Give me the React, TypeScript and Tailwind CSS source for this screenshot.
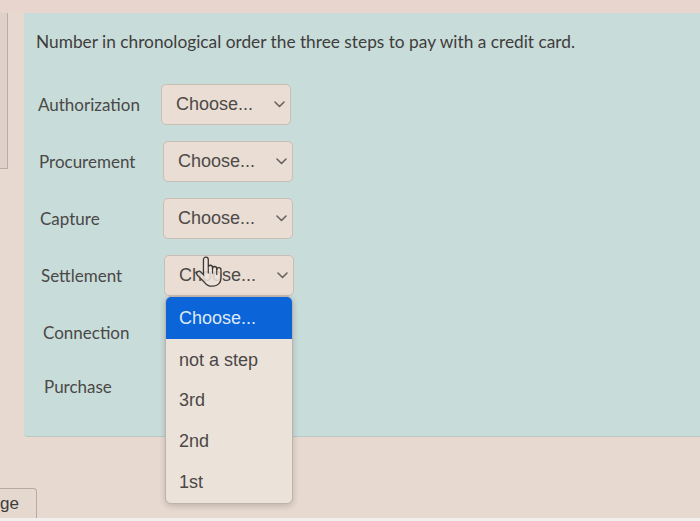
import React from 'react'

// slight per-row shift, the photo is taken at an angle
const rows = [
  { label: 'Authorization', select: true, shift: 'pl-[2px]', selShift: 'ml-0' },
  { label: 'Procurement', select: true, shift: 'pl-[3px]', selShift: 'ml-[2px]' },
  { label: 'Capture', select: true, shift: 'pl-[4px]', selShift: 'ml-[2px]' },
  { label: 'Settlement', select: true, shift: 'pl-[5px]', selShift: 'ml-[3px]' },
  { label: 'Connection', select: false, shift: 'pl-[7px]', selShift: '' },
  { label: 'Purchase', select: false, shift: 'pl-[8px]', selShift: '' },
]

const options = ['not a step', '3rd', '2nd', '1st']

function Chevron() {
  return (
    <svg className="w-[11px] h-[7px]" viewBox="0 0 11 7" fill="none">
      <path d="M1 1l4.5 4.5L10 1" stroke="#6b6461" strokeWidth={1.6} strokeLinecap="round" strokeLinejoin="round" />
    </svg>
  )
}

function FakeSelect({ className }: { className: string }) {
  return (
    <div className={`${className} w-[130px] h-[41px] flex items-center justify-between pl-[14px] pr-[5px] bg-[#e9ddd4] border border-[#c9beb6] rounded-[5px] font-['Liberation_Sans',Arial,sans-serif] text-[18px] text-[#4d4a48]`}>
      <span>Choose...</span>
      <Chevron />
    </div>
  )
}

function HandCursor() {
  return (
    <svg className="absolute left-[195px] top-[255px] w-[29px] h-[37px]" viewBox="0 0 24 30" fill="none">
      <path
        d="M9 1.5c-1.1 0-2 .9-2 2V16l-2.2-2.3c-.8-.8-2-.8-2.8 0-.8.8-.8 2 0 2.8L8 22.5c1.5 1.8 3.5 3 6 3h1c3.6 0 6.5-2.9 6.5-6.5V12c0-1-.8-1.8-1.8-1.8s-1.7.8-1.7 1.8v-1c0-1-.8-1.8-1.8-1.8s-1.7.8-1.7 1.8v-1c0-1-.8-1.8-1.8-1.8S11 9 11 10V3.5c0-1.1-.9-2-2-2z"
        fill="#ede4dc"
        fillOpacity={0.85}
        stroke="#3f3a38"
        strokeWidth={1.1}
      />
      <path d="M11 10v5M14.5 10.2v5M18 11.2v5" stroke="#3f3a38" strokeWidth={1} />
    </svg>
  )
}

export default function App() {
  return (
    <div className="relative w-[700px] h-[521px] overflow-hidden bg-[#e7d9d0] font-['Lato',sans-serif]">
      <div className="h-[13px] bg-[#e8d6ce]" />

      <div className="flex">
        <div className="w-[8px] h-[156px] bg-[#ddd1c9] border-r border-b border-[#b8aca5] shrink-0" />
        <div className="ml-[16px] flex-1 h-[424px] bg-[#c8dcd9] rounded-bl-[4px] border-b border-[#b8c8c5] pt-[18px] pl-[12px]">
          <p className="text-[17.3px] leading-[22px] text-[#3f3d3c]">
            Number in chronological order the three steps to pay with a credit card.
          </p>

          <div className="mt-[31px] flex flex-col gap-[16px]">
            {rows.map((r, i) => (
              <div
                key={r.label}
                className={`flex items-center h-[41px] ${i === 5 ? 'mt-[-3px]' : ''}`}
              >
                <span className={`w-[125px] ${r.shift} text-[17px] text-[#4a4847]`}>{r.label}</span>
                {r.select && <FakeSelect className={r.selShift} />}
              </div>
            ))}
          </div>
        </div>
      </div>

      <HandCursor />

      <div className="absolute left-[165px] top-[296px] w-[128px] h-[208px] bg-[#ebe2da] border border-[#bdb3ac] rounded-[6px] shadow-[0_2px_6px_rgba(0,0,0,0.18)] overflow-hidden font-['Liberation_Sans',Arial,sans-serif] text-[18px]">
        <div className="h-[42px] bg-[#0b64d8] text-[#dfeaf8] flex items-center pl-[13px]">Choose...</div>
        {options.map((o, i) => (
          <div key={o} className={`h-[41px] flex items-center pl-[13px] text-[#4b4746] ${i === 0 ? 'pt-[1px]' : ''}`}>
            {o}
          </div>
        ))}
      </div>

      <div className="absolute left-0 bottom-[3px] w-[37px] h-[30px] border-t border-r border-[#b6aba4] rounded-tr-[4px] bg-[#e4d8cf] flex items-end pb-[2px] text-[17px] text-[#3e3b3a] font-['Liberation_Sans',Arial,sans-serif]">
        ge
      </div>
      <div className="absolute left-0 bottom-0 w-full h-[3px] bg-[#f3efec]" />
    </div>
  )
}
